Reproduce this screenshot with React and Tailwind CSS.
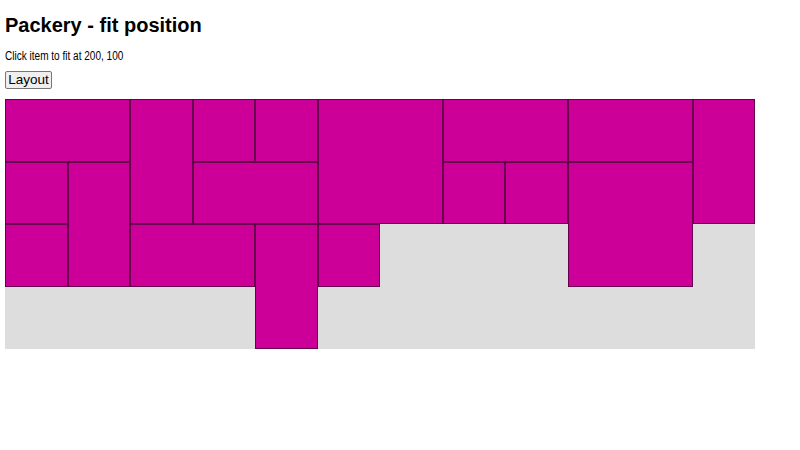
import React from "react";

const U = 62.5;
const items = [
  [0, 0, 2, 1],
  [2, 0, 1, 2],
  [3, 0, 1, 1],
  [4, 0, 1, 1],
  [5, 0, 2, 2],
  [7, 0, 2, 1],
  [9, 0, 2, 1],
  [11, 0, 1, 2],
  [0, 1, 1, 1],
  [1, 1, 1, 2],
  [3, 1, 2, 1],
  [7, 1, 1, 1],
  [8, 1, 1, 1],
  [9, 1, 2, 2],
  [0, 2, 1, 1],
  [2, 2, 2, 1],
  [4, 2, 1, 2],
  [5, 2, 1, 1],
];

export default function App() {
  return (
    <div className="bg-white w-[800px] h-[450px] px-[5px] text-black" style={{ fontFamily: '"Liberation Sans", Arial, sans-serif' }}>
      <div className="pt-[13.5px]">
        <h1 className="text-[20px] leading-[23px] font-bold">Packery - fit position</h1>
        <p className="mt-[12px] text-[12px] leading-[14px] origin-left scale-x-[0.837]">
          Click item to fit at 200, 100
        </p>
        <div className="mt-[8.5px] flex">
          <button className="h-[18px] w-[47px] bg-[#efefef] border border-[#767676] rounded-[2px] text-[13.5px] leading-[16px] p-0 text-black">
            Layout
          </button>
        </div>
        <div className="relative mt-[10px] w-[750px] h-[250px] bg-[#dddddd]">
          {items.map(([x, y, w, h], i) => (
            <div
              key={i}
              className="absolute bg-[#cc0099] border border-black/50"
              style={{ left: x * U, top: y * U, width: w * U, height: h * U }}
            />
          ))}
        </div>
      </div>
    </div>
  );
}
